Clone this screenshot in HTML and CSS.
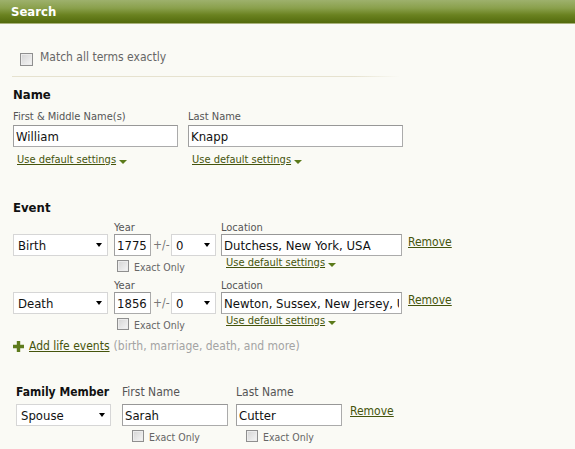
FILE: index.html
```html
<!DOCTYPE html>
<html>
<head>
<meta charset="utf-8">
<title>Search</title>
<link rel="stylesheet" href="styles.css">
</head>
<body>
<div class="panel">
  <div class="header">Search</div>
  <div class="form">
    <label class="match"><input type="checkbox" class="cb cb-lg"><span class="match-text">Match all terms exactly</span></label>
    <div class="divider"></div>

    <div class="sec-title name-title">Name</div>
    <div class="name-row">
      <div class="name-field first">
        <div class="lbl">First &amp; Middle Name(s)</div>
        <input type="text" class="inp" value="William">
        <div class="def-wrap"><a class="defaults" href="#">Use default settings</a><span class="tri"></span></div>
      </div>
      <div class="name-field last">
        <div class="lbl">Last Name</div>
        <input type="text" class="inp" value="Knapp">
        <div class="def-wrap"><a class="defaults" href="#">Use default settings</a><span class="tri"></span></div>
      </div>
    </div>

    <div class="sec-title event-title">Event</div>

    <div class="event-grid">
      <div class="lbl ev-ylbl">Year</div>
      <div class="lbl ev-llbl">Location</div>
      <div class="sel ev-type"><span>Birth</span><span class="arr"></span></div>
      <input type="text" class="inp ev-year" value="1775">
      <span class="pm">+/-</span>
      <div class="sel ev-range"><span>0</span><span class="arr"></span></div>
      <input type="text" class="inp ev-loc" value="Dutchess, New York, USA">
      <a class="remove ev-remove" href="#">Remove</a>
      <label class="exact ev-exact"><input type="checkbox" class="cb"><span>Exact Only</span></label>
      <div class="ev-def"><a class="defaults" href="#">Use default settings</a><span class="tri"></span></div>
    </div>

    <div class="event-grid second">
      <div class="lbl ev-ylbl">Year</div>
      <div class="lbl ev-llbl">Location</div>
      <div class="sel ev-type"><span>Death</span><span class="arr"></span></div>
      <input type="text" class="inp ev-year" value="1856">
      <span class="pm">+/-</span>
      <div class="sel ev-range"><span>0</span><span class="arr"></span></div>
      <input type="text" class="inp ev-loc" value="Newton, Sussex, New Jersey, USA">
      <a class="remove ev-remove" href="#">Remove</a>
      <label class="exact ev-exact"><input type="checkbox" class="cb"><span>Exact Only</span></label>
      <div class="ev-def"><a class="defaults" href="#">Use default settings</a><span class="tri"></span></div>
    </div>

    <div class="add">
      <svg class="plus" width="11" height="11" viewBox="0 0 11 11"><path d="M3.8 0h3.4v3.8H11v3.4H7.2V11H3.8V7.2H0V3.8h3.8z" fill="#5e7b1d"/></svg>
      <a class="add-link" href="#">Add life events</a>
      <span class="add-note">(birth, marriage, death, and more)</span>
    </div>

    <div class="family-grid">
      <div class="fam-title">Family Member</div>
      <div class="lbl-lg fam-flbl">First Name</div>
      <div class="lbl-lg fam-llbl">Last Name</div>
      <div class="sel fam-sel"><span>Spouse</span><span class="arr"></span></div>
      <input type="text" class="inp fam-first" value="Sarah">
      <input type="text" class="inp fam-last" value="Cutter">
      <a class="remove fam-remove" href="#">Remove</a>
      <label class="exact fam-ex1"><input type="checkbox" class="cb"><span>Exact Only</span></label>
      <label class="exact fam-ex2"><input type="checkbox" class="cb"><span>Exact Only</span></label>
    </div>
  </div>
</div>
</body>
</html>
```

FILE: styles.css
```css
html, body {
  margin: 0;
  padding: 0;
}
body {
  background: #fafaf5;
  font-family: "DejaVu Sans Condensed", "DejaVu Sans", sans-serif;
  font-stretch: condensed;
  font-size: 12px;
  color: #222;
}
.header {
  height: 23px;
  border-bottom: 1px solid #a9b27c;
  background: linear-gradient(#9eb16d 0%, #8aa04c 35%, #6a8220 65%, #536a0c 100%);
  color: #fff;
  font-weight: bold;
  font-size: 13px;
  line-height: 23px;
  padding-left: 11px;
}
.form {
  padding-left: 13px;
}
.match {
  display: flex;
  align-items: flex-start;
  margin-top: 29px;
  padding-left: 7px;
  height: 13px;
}
.cb {
  -webkit-appearance: none;
  appearance: none;
  box-sizing: border-box;
  margin: 0;
  width: 12px;
  height: 12px;
  border: 1px solid #8f8f8f;
  background: linear-gradient(135deg, #d4d4d4, #f6f6f6);
  box-shadow: inset 0 0 0 1px #ececec;
  flex: none;
}
.cb-lg {
  width: 13px;
  height: 13px;
}
.match-text {
  margin-left: 7px;
  margin-top: -2px;
  line-height: 13px;
  color: #666;
  font-size: 12px;
}
.divider {
  margin-top: 10px;
  margin-left: -1px;
  width: 388px;
  height: 1px;
  background: linear-gradient(to right, #e6e2cf 88%, rgba(230, 226, 207, 0));
}
.sec-title {
  font-weight: bold;
  font-size: 13px;
  line-height: 16px;
  color: #111;
}
.name-title {
  margin-top: 10px;
}
.name-row {
  display: flex;
  gap: 10px;
  margin-top: 7px;
}
.name-field {
  display: flex;
  flex-direction: column;
  align-items: flex-start;
}
.def-wrap {
  margin-top: 5px;
  margin-left: 4px;
  height: 14px;
  line-height: 14px;
}
.first .inp {
  width: 165px;
}
.last .inp {
  width: 215px;
}
.lbl {
  font-size: 11px;
  line-height: 13px;
  color: #555;
}
.lbl-lg {
  font-size: 12px;
  line-height: 18px;
  color: #555;
}
.inp {
  box-sizing: border-box;
  height: 22px;
  margin: 2px 0 0 0;
  border: 1px solid #ababab;
  border-top-color: #979797;
  border-left-color: #9f9f9f;
  background: #fff;
  font-family: "DejaVu Sans Condensed", "DejaVu Sans", sans-serif;
  font-stretch: condensed;
  font-size: 13px;
  color: #111;
  padding: 0 2px;
  outline: none;
}
.defaults {
  line-height: 14px;
  color: #45540c;
  text-decoration: underline;
  font-size: 11px;
}
.tri {
  display: inline-block;
  width: 0;
  height: 0;
  margin-left: 3px;
  border-left: 4px solid transparent;
  border-right: 4px solid transparent;
  border-top: 4px solid #5b7a1a;
  vertical-align: -1px;
}
.event-title {
  margin-top: 34px;
}
.event-grid {
  display: grid;
  grid-template-columns: 101px 39px 18px 50px 187px auto;
  grid-template-rows: 13px 22px 16px;
  margin-top: 5px;
}
.event-grid.second {
  margin-top: 7px;
}
.event-grid .inp {
  margin: 0;
}
.ev-ylbl { grid-column: 2; grid-row: 1; }
.ev-llbl { grid-column: 5; grid-row: 1; }
.ev-type { grid-column: 1; grid-row: 2; width: 95px; }
.ev-year { grid-column: 2; grid-row: 2; width: 37px; }
.pm {
  grid-column: 3;
  grid-row: 2;
  align-self: center;
  color: #777;
  font-size: 12px;
}
.ev-range { grid-column: 4; grid-row: 2; width: 45px; }
.ev-loc { grid-column: 5; grid-row: 2; width: 181px; }
.ev-remove {
  grid-column: 6;
  grid-row: 2;
  align-self: start;
  margin-top: 1px;
}
.ev-exact {
  grid-column: 2 / span 3;
  grid-row: 3;
  margin-top: 4px;
  margin-left: 3px;
}
.ev-def {
  grid-column: 5;
  grid-row: 3;
  margin-left: 5px;
  margin-top: -1px;
  height: 14px;
  line-height: 14px;
}
.sel {
  box-sizing: border-box;
  height: 22px;
  border: 1px solid #d6d6d6;
  background: #fff;
  display: flex;
  align-items: center;
  justify-content: space-between;
  padding: 0 5px 0 4px;
  font-size: 13px;
  color: #111;
}
.arr {
  width: 0;
  height: 0;
  border-left: 3.5px solid transparent;
  border-right: 3.5px solid transparent;
  border-top: 4px solid #000;
}
.remove {
  line-height: 14px;
  font-size: 12px;
  color: #45540c;
  text-decoration: underline;
}
.exact {
  display: flex;
  align-items: flex-start;
  font-size: 10.5px;
  line-height: 12px;
  color: #666;
}
.exact span {
  margin-left: 5px;
  margin-top: 1px;
}
.add {
  display: flex;
  align-items: center;
  margin-top: 9px;
  height: 14px;
}
.plus {
  flex: none;
  margin-top: 1px;
}
.add-link {
  margin-left: 5px;
  color: #45540c;
  text-decoration: underline;
  font-size: 12px;
  line-height: 14px;
}
.add-note {
  margin-left: 4px;
  color: #a3a3a3;
  font-size: 12px;
  line-height: 14px;
}
.family-grid {
  display: grid;
  grid-template-columns: 106px 114px 114px auto;
  grid-template-rows: 18px 22px 16px;
  row-gap: 3px;
  margin-top: 30px;
  margin-left: 3px;
}
.family-grid .inp {
  margin: 0;
}
.fam-title {
  grid-column: 1;
  grid-row: 1;
  font-weight: bold;
  font-size: 12px;
  line-height: 18px;
  color: #111;
}
.fam-flbl { grid-column: 2; grid-row: 1; }
.fam-llbl { grid-column: 3; grid-row: 1; }
.fam-sel { grid-column: 1; grid-row: 2; width: 95px; }
.fam-first { grid-column: 2; grid-row: 2; width: 106px; }
.fam-last { grid-column: 3; grid-row: 2; width: 106px; }
.fam-remove {
  grid-column: 4;
  grid-row: 2;
  align-self: start;
}
.fam-ex1 { grid-column: 2; grid-row: 3; margin-left: 10px; margin-top: 1px; }
.fam-ex2 { grid-column: 3; grid-row: 3; margin-left: 10px; margin-top: 1px; }
```
